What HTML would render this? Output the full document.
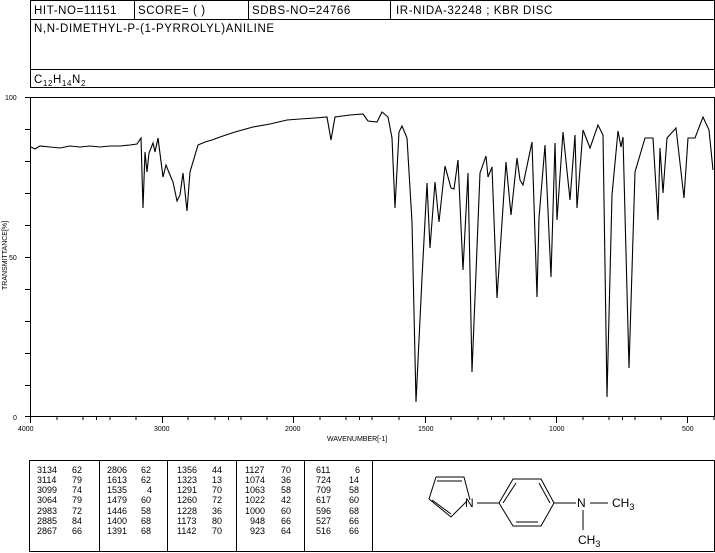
<!DOCTYPE html>
<html><head><meta charset="utf-8"><style>
body{margin:0;background:#fff;width:715px;height:553px;overflow:hidden}
svg{display:block}
text{font-family:"Liberation Sans",sans-serif;fill:#000}
.h{font-size:11.5px;letter-spacing:0.6px}
.t{font-size:9px;font-family:"Liberation Mono",monospace}
.s{font-size:7px}
</style></head><body>
<svg width="715" height="553" viewBox="0 0 715 553" xmlns="http://www.w3.org/2000/svg">
<g fill="none" stroke="#000" stroke-width="1">
<rect x="30.5" y="0.5" width="684" height="87"/>
<line x1="30" y1="19.5" x2="715" y2="19.5"/>
<line x1="30" y1="69.5" x2="715" y2="69.5"/>
<line x1="134.5" y1="0" x2="134.5" y2="19"/>
<line x1="248.5" y1="0" x2="248.5" y2="19"/>
<line x1="390.5" y1="0" x2="390.5" y2="19"/>
<rect x="30.5" y="97.5" width="684" height="319"/>
<rect x="29.5" y="460.5" width="685" height="91"/>
<line x1="99.5" y1="460" x2="99.5" y2="552"/>
<line x1="167.5" y1="460" x2="167.5" y2="552"/>
<line x1="236.5" y1="460" x2="236.5" y2="552"/>
<line x1="304.5" y1="460" x2="304.5" y2="552"/>
<line x1="372.5" y1="460" x2="372.5" y2="552"/>
<path d="M25 97.5H30M25 129.5H30M25 161.5H30M25 193.5H30M25 225.5H30M25 257.5H30M25 289.5H30M25 321.5H30M25 353.5H30M25 385.5H30M25 416.5H30"/>
<path d="M30.5 417V423M162.5 417V423M293.5 417V423M425.5 417V423M556.5 417V423M687.5 417V423M96.5 417V420M228.5 417V420M359.5 417V420M491.5 417V420M622.5 417V420M57 417V420M83 417V420M110 417V420M136 417V420M188 417V420M215 417V420M241 417V420M267 417V420M320 417V420M346 417V420M372 417V420M399 417V420M451 417V420M478 417V420M504 417V420M530 417V420M583 417V420M609 417V420M635 417V420M661 417V420M714 417V420"/>
<polyline stroke-width="1.1" points="31,147 35,149 40,146 50,147 60,148 70,146 80,147 90,146 100,147 110,146 120,146 130,145 137,144 141,138 143,208 145,152 147,172 149,153 153,143 155,152 158,138 163,177 166,165 170,175 173,182 177,201 180,195 183,173 187,211 190,172 198,145 205,142 212,140 220,137 235,132 253,127 270,124 287,120 300,119 315,118 327,117 331,140 335,117 350,115 363,114 368,121 377,122 382,112 388,117 392,138 395,208 399,132 402,126 407,138 412,222 416,402 422,278 427,183 430,248 435,182 439,222 445,166 451,188 454,189 458,160 463,270 468,173 472,372 480,173 486,156 488,177 492,167 497,298 506,162 511,215 517,158 520,180 523,185 532,142 537,297 539,218 545,145 551,277 555,143 557,220 563,132 570,200 575,135 577,208 583,130 590,148 598,125 603,135 607,397 612,195 618,131 621,147 623,137 629,368 635,172 645,138 653,138 658,220 660,148 663,193 667,138 676,128 684,198 688,138 695,138 703,117 709,130 713,170"/>
</g>
<text class="h" x="34" y="14">HIT-NO=11151</text>
<text class="h" x="138" y="14">SCORE=  (   )</text>
<text class="h" x="252" y="14">SDBS-NO=24766</text>
<text class="h" x="396" y="14">IR-NIDA-32248 ; KBR DISC</text>
<text class="h" x="34" y="32">N,N-DIMETHYL-P-(1-PYRROLYL)ANILINE</text>
<text class="h" x="34" y="83">C<tspan font-size="8" dy="3">12</tspan><tspan dy="-3">H</tspan><tspan font-size="8" dy="3">14</tspan><tspan dy="-3">N</tspan><tspan font-size="8" dy="3">2</tspan></text>
<text class="s" x="5" y="100">100</text>
<text class="s" x="9" y="260">50</text>
<text class="s" x="13" y="420">0</text>
<text class="s" transform="translate(7,290) rotate(-90)">TRANSMITTANCE[%]</text>
<text class="s" x="18" y="431">4000</text>
<text class="s" x="154" y="431">3000</text>
<text class="s" x="285" y="431">2000</text>
<text class="s" x="418" y="431">1500</text>
<text class="s" x="549" y="431">1000</text>
<text class="s" x="682" y="431">500</text>
<text class="s" x="327" y="441">WAVENUMBER[-1]</text>
<g class="t">
<text x="37" y="473">3134</text><text x="72" y="473">62</text><text x="107" y="473">2806</text><text x="141" y="473">62</text><text x="177" y="473">1356</text><text x="212" y="473">44</text><text x="245" y="473">1127</text><text x="281" y="473">70</text><text x="316" y="473">611</text><text x="355" y="473">6</text>
<text x="37" y="483">3114</text><text x="72" y="483">79</text><text x="107" y="483">1613</text><text x="141" y="483">62</text><text x="177" y="483">1323</text><text x="212" y="483">13</text><text x="245" y="483">1074</text><text x="281" y="483">36</text><text x="316" y="483">724</text><text x="349" y="483">14</text>
<text x="37" y="493">3099</text><text x="72" y="493">74</text><text x="107" y="493">1535</text><text x="147" y="493">4</text><text x="177" y="493">1291</text><text x="212" y="493">70</text><text x="245" y="493">1063</text><text x="281" y="493">58</text><text x="316" y="493">709</text><text x="349" y="493">58</text>
<text x="37" y="503">3064</text><text x="72" y="503">79</text><text x="107" y="503">1479</text><text x="141" y="503">60</text><text x="177" y="503">1260</text><text x="212" y="503">72</text><text x="245" y="503">1022</text><text x="281" y="503">42</text><text x="316" y="503">617</text><text x="349" y="503">60</text>
<text x="37" y="514">2983</text><text x="72" y="514">72</text><text x="107" y="514">1446</text><text x="141" y="514">58</text><text x="177" y="514">1228</text><text x="212" y="514">36</text><text x="245" y="514">1000</text><text x="281" y="514">60</text><text x="316" y="514">596</text><text x="349" y="514">68</text>
<text x="37" y="524">2885</text><text x="72" y="524">84</text><text x="107" y="524">1400</text><text x="141" y="524">68</text><text x="177" y="524">1173</text><text x="212" y="524">80</text><text x="250" y="524">948</text><text x="281" y="524">66</text><text x="316" y="524">527</text><text x="349" y="524">66</text>
<text x="37" y="534">2867</text><text x="72" y="534">66</text><text x="107" y="534">1391</text><text x="141" y="534">68</text><text x="177" y="534">1142</text><text x="212" y="534">70</text><text x="250" y="534">923</text><text x="281" y="534">64</text><text x="316" y="534">516</text><text x="349" y="534">66</text>
</g>
<g fill="none" stroke="#000" stroke-width="1">
<path d="M436 477L464 477L470 500M467 501L451 517L429 499L436 477M437 481L462 481M432 500L451 514"/>
<path d="M477 503L499 503M499 503L513 479L541 479L554 503L541 526L513 526Z M516 483L503 503 M539 483L550 503 M516 522L538 522"/>
<path d="M554 503L576 503M590 503L608 503M583 510L583 530"/>
</g>
<text x="465" y="507" font-size="12">N</text>
<text x="577" y="507" font-size="12">N</text>
<text x="612" y="507" font-size="12">CH<tspan font-size="9" dy="3">3</tspan></text>
<text x="578" y="544" font-size="12">CH<tspan font-size="9" dy="3">3</tspan></text>
</svg>
</body></html>
